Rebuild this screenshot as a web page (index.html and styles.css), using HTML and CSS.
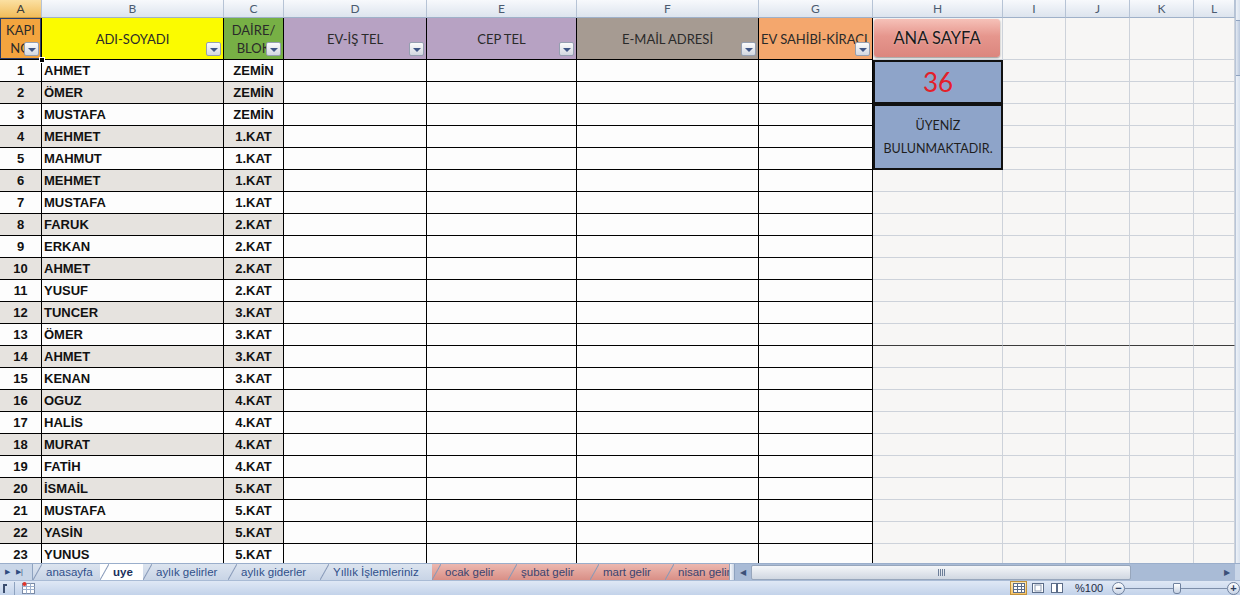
FILE: index.html
```html
<!DOCTYPE html>
<html lang="tr">
<head>
    <meta charset="UTF-8">
    <meta name="viewport" content="width=device-width, initial-scale=1.0">
    <title>Apartman Üye Listesi</title>
    <link rel="stylesheet" href="styles.css">
</head>
<body>
    <div class="window">
        <div class="sheet-area">
            <div class="grid" id="grid">
                <div class="colhead sel">A</div>
                <div class="colhead">B</div>
                <div class="colhead">C</div>
                <div class="colhead">D</div>
                <div class="colhead">E</div>
                <div class="colhead">F</div>
                <div class="colhead">G</div>
                <div class="colhead">H</div>
                <div class="colhead">I</div>
                <div class="colhead">J</div>
                <div class="colhead">K</div>
                <div class="colhead">L</div>

                <div class="hcell kapi">KAPI NO<span class="filter"></span><span class="fill-handle"></span></div>
                <div class="hcell adi">ADI-SOYADI<span class="filter"></span></div>
                <div class="hcell daire">DAİRE/ BLOK<span class="filter"></span></div>
                <div class="hcell tel">EV-İŞ TEL<span class="filter"></span></div>
                <div class="hcell tel">CEP TEL<span class="filter"></span></div>
                <div class="hcell mail">E-MAİL ADRESİ<span class="filter"></span></div>
                <div class="hcell sahip">EV SAHİBİ-KİRACI<span class="filter"></span></div>
                <div class="hcell home"><div class="home-btn">ANA SAYFA</div></div>
                <div class="hcell empty"></div>
                <div class="hcell empty"></div>
                <div class="hcell empty"></div>
                <div class="hcell empty"></div>
            </div>
            <div class="vscroll"><div class="vthumb"></div></div>
        </div>

        <div class="tabbar">
            <div class="tabnav"><span>&#9654;</span><span>&#9654;|</span></div>
            <div class="tabs">
                <div class="tab" style="width: 67px">anasayfa</div>
                <div class="tab active" style="width: 43px">uye</div>
                <div class="tab" style="width: 85px">aylık gelirler</div>
                <div class="tab" style="width: 92px">aylık giderler</div>
                <div class="tab" style="width: 112px">Yıllık İşlemleriniz</div>
                <div class="tab pink" style="width: 76px">ocak gelir</div>
                <div class="tab pink" style="width: 82px">şubat gelir</div>
                <div class="tab pink" style="width: 75px">mart gelir</div>
                <div class="tab pink" style="width: 64px">nisan gelir</div>
            </div>
            <div class="split"></div>
            <div class="hscroll">
                <span class="arrow">&#9664;</span>
                <div class="hthumb"><span class="grip"></span></div>
                <div class="track"></div>
                <span class="arrow">&#9654;</span>
            </div>
        </div>

        <div class="statusbar">
            <span class="status-mark"></span>
            <span class="status-sep"></span>
            <svg class="macro-icon" width="13" height="12" viewBox="0 0 13 12">
                <rect x="0.5" y="1.5" width="12" height="10" fill="#fff" stroke="#7a8aa6"/>
                <path d="M0.5 4.5h12M0.5 7.5h12M4.5 1.5v10M8.5 1.5v10" stroke="#9db0cc"/>
                <circle cx="2.5" cy="2" r="2" fill="#e0352b"/>
            </svg>
            <div class="status-space"></div>
            <div class="views">
                <span class="view on">
                    <svg width="12" height="10" viewBox="0 0 12 10"><rect x="0.5" y="0.5" width="11" height="9" fill="#fff" stroke="#5b6c88"/><path d="M0.5 3.5h11M0.5 6.5h11M4.5 0.5v9M8.5 0.5v9" stroke="#5b6c88"/></svg>
                </span>
                <span class="view">
                    <svg width="12" height="10" viewBox="0 0 12 10"><rect x="0.5" y="0.5" width="11" height="9" fill="#fff" stroke="#5b6c88"/><rect x="3" y="2" width="6" height="6" fill="none" stroke="#8a99b1"/></svg>
                </span>
                <span class="view">
                    <svg width="12" height="10" viewBox="0 0 12 10"><rect x="0.5" y="0.5" width="11" height="9" fill="#fff" stroke="#5b6c88"/><path d="M6 0.5v9" stroke="#5b6c88" stroke-width="2"/></svg>
                </span>
            </div>
            <span class="zoom-label">%100</span>
            <div class="zoom">
                <span class="zbtn">&minus;</span>
                <div class="zline"><span class="zthumb"></span></div>
                <span class="zbtn">+</span>
            </div>
        </div>
    </div>

    <script>
        const members = [
            ['AHMET', 'ZEMİN'], ['ÖMER', 'ZEMİN'], ['MUSTAFA', 'ZEMİN'],
            ['MEHMET', '1.KAT'], ['MAHMUT', '1.KAT'], ['MEHMET', '1.KAT'], ['MUSTAFA', '1.KAT'],
            ['FARUK', '2.KAT'], ['ERKAN', '2.KAT'], ['AHMET', '2.KAT'], ['YUSUF', '2.KAT'],
            ['TUNCER', '3.KAT'], ['ÖMER', '3.KAT'], ['AHMET', '3.KAT'], ['KENAN', '3.KAT'],
            ['OGUZ', '4.KAT'], ['HALİS', '4.KAT'], ['MURAT', '4.KAT'], ['FATİH', '4.KAT'],
            ['İSMAİL', '5.KAT'], ['MUSTAFA', '5.KAT'], ['YASİN', '5.KAT'], ['YUNUS', '5.KAT']
        ];

        const grid = document.getElementById('grid');

        members.forEach((member, i) => {
            const no = i + 1;
            const shade = no % 2 === 0 ? ' shade' : '';
            const brk = no === 13 ? ' brk' : '';

            let html = `<div class="cell num${shade}">${no}</div>`;
            html += `<div class="cell name${shade}">${member[0]}</div>`;
            html += `<div class="cell kat${shade}">${member[1]}</div>`;
            html += '<div class="cell"></div>'.repeat(4);

            // H sütunundaki birleşik kutular
            if (no === 1) html += '<div class="box count">36</div>';
            if (no === 3) html += '<div class="box note">ÜYENİZ<br>BULUNMAKTADIR.</div>';
            if (no > 5) html += `<div class="cell grd${brk}"></div>`;

            html += `<div class="cell grd${brk}"></div>`.repeat(4);
            grid.insertAdjacentHTML('beforeend', html);
        });
    </script>
</body>
</html>
```

FILE: styles.css
```css
* {
    box-sizing: border-box;
    margin: 0;
    padding: 0;
}

body {
    width: 1240px;
    height: 595px;
    overflow: hidden;
    background-color: #f7f6f5;
    font-family: Lato, 'Liberation Sans', sans-serif;
}

.window {
    display: flex;
    flex-direction: column;
    height: 595px;
}

.sheet-area {
    display: flex;
    height: 563px;
    overflow: hidden;
}

.grid {
    display: grid;
    grid-template-columns: 42px 182px 60px 143px 150px 182px 114px 130px 63px 64px 64px 41px;
    grid-template-rows: 18px 42px;
    grid-auto-rows: 22px;
    align-content: start;
    width: 1235px;
}

/* sütun başlıkları */
.colhead {
    display: flex;
    align-items: center;
    justify-content: center;
    background: linear-gradient(#f7f9fc, #dde4ee);
    border-right: 1px solid #b6c3d5;
    border-bottom: 1px solid #9fb1c9;
    color: #4b5b70;
    font-size: 12px;
}

.colhead.sel {
    background: linear-gradient(#fbe0a2, #f1bd5c);
    border-bottom-color: #c99a40;
    color: #3a3a3a;
}

/* tablo başlık satırı */
.hcell {
    position: relative;
    display: flex;
    align-items: center;
    justify-content: center;
    text-align: center;
    border-right: 1px solid #000;
    border-bottom: 1px solid #000;
    color: #2a2a2a;
    font-size: 13px;
    line-height: 18px;
    overflow: hidden;
}

.kapi {
    background-color: #f3a43e;
    overflow: visible;
    box-shadow: inset 0 0 0 1px #2c3f69;
    padding: 0 1px;
}

.adi {
    background-color: #fbfb00;
}

.daire {
    background-color: #77b045;
}

.tel {
    background-color: #b7a2c3;
}

.mail {
    background-color: #a69b92;
}

.sahip {
    background-color: #f4a76d;
    justify-content: flex-start;
    white-space: nowrap;
    padding-left: 2px;
}

.hcell.home,
.hcell.empty {
    border-color: #cdd2da;
    background-color: #f7f6f5;
}

.hcell.home {
    align-items: stretch;
    padding: 1px 2px 2px 1px;
}

.home-btn {
    flex: 1;
    display: flex;
    align-items: center;
    justify-content: center;
    background: linear-gradient(#f6c1b8, #e6968d 45%, #db867e);
    border-radius: 3px;
    box-shadow: 0 1px 2px rgba(0, 0, 0, 0.4);
    color: #1a1a1a;
    font-size: 16.5px;
    text-shadow: 0 0 2px rgba(255, 255, 255, 0.5);
}

.filter {
    position: absolute;
    right: 2px;
    bottom: 3px;
    width: 15px;
    height: 14px;
    border: 1px solid #959fb1;
    border-radius: 2px;
    background: linear-gradient(#fbfbfc, #d3d8e0);
}

.filter::after {
    content: '';
    position: absolute;
    left: 3px;
    top: 5px;
    border-left: 4px solid transparent;
    border-right: 4px solid transparent;
    border-top: 4px solid #3f5585;
}

.fill-handle {
    position: absolute;
    right: -4px;
    bottom: -4px;
    width: 6px;
    height: 6px;
    background-color: #000;
    border: 1px solid #fff;
    z-index: 2;
}

/* veri hücreleri */
.cell {
    border-right: 1px solid #000;
    border-bottom: 1px solid #000;
    background-color: #fdfdfd;
    color: #111;
    font-family: 'Liberation Sans', Arial, sans-serif;
    font-size: 13px;
    font-weight: bold;
    line-height: 21px;
    white-space: nowrap;
    overflow: hidden;
}

.cell.shade {
    background-color: #e6e3df;
}

.num,
.kat {
    text-align: center;
}

.name {
    padding-left: 2px;
}

.cell.grd {
    border-right-color: #cdd2da;
    border-bottom-color: #cdd2da;
    background-color: #f7f6f5;
}

.cell.grd.brk {
    border-bottom-color: #3c3c3c;
}

.box {
    display: flex;
    align-items: center;
    justify-content: center;
    text-align: center;
    background-color: #8ea4c9;
    border: 2px solid #111;
}

.count {
    grid-row: span 2;
    color: #e3202a;
    font-size: 26px;
}

.note {
    grid-row: span 3;
    color: #1e1e1e;
    font-size: 12.5px;
    line-height: 23px;
}

.vscroll {
    width: 5px;
    background: linear-gradient(90deg, #eef2f8, #d9e2ee);
    border-left: 1px solid #b8c5d8;
}

.vthumb {
    margin-top: 20px;
    height: 56px;
    background: linear-gradient(90deg, #e3e9f2, #b9c7dc);
    border-top: 1px solid #8ea2bf;
    border-bottom: 1px solid #8ea2bf;
}

/* sayfa sekmeleri */
.tabbar {
    display: flex;
    height: 17px;
    background-color: #c9d6e8;
    border-top: 1px solid #9aaecb;
    font-family: 'Liberation Sans', Arial, sans-serif;
    font-size: 11.5px;
}

.tabnav {
    display: flex;
    align-items: center;
    gap: 6px;
    width: 33px;
    padding-left: 5px;
    color: #2f4c80;
    font-size: 7px;
    border-right: 1px solid #8fa3c0;
}

.tabs {
    display: flex;
    width: 696px;
    overflow: hidden;
}

.tab {
    position: relative;
    flex: none;
    padding-left: 13px;
    line-height: 16px;
    white-space: nowrap;
    overflow: hidden;
    color: #30508a;
    background: linear-gradient(#dce4ef, #c8d4e6);
}

.tab::before {
    content: '';
    position: absolute;
    left: 0;
    top: 0;
    width: 9px;
    height: 100%;
    background: linear-gradient(to bottom right, transparent calc(50% - 1px), #8799b8 50%, transparent calc(50% + 1px));
}

.tab.active {
    background: #fff;
    color: #1b2f5c;
    font-weight: bold;
}

.tab.pink {
    background: linear-gradient(#ecb8b0, #d98f86);
    color: #3a4470;
}

.split {
    width: 6px;
    background: linear-gradient(90deg, #f6f8fb, #cdd7e6);
    border-left: 1px solid #8ea2bf;
    border-right: 1px solid #8ea2bf;
}

.hscroll {
    display: flex;
    align-items: center;
    width: 500px;
    background-color: #a9bbd6;
}

.hscroll .arrow {
    width: 16px;
    text-align: center;
    color: #3c5078;
    font-size: 8px;
}

.hthumb {
    display: flex;
    align-items: center;
    justify-content: center;
    width: 380px;
    height: 15px;
    background: linear-gradient(#f4f6f9, #d0d7e1);
    border: 1px solid #97a6bc;
    border-radius: 2px;
}

.grip {
    width: 7px;
    height: 7px;
    background: repeating-linear-gradient(90deg, #6d7e98 0 1px, transparent 1px 2px);
}

.track {
    flex: 1;
}

/* durum çubuğu */
.statusbar {
    display: flex;
    align-items: center;
    height: 15px;
    background: linear-gradient(#dfe8f5, #c3d3ea);
    border-top: 1px solid #a9bbd5;
    color: #1e2c44;
    font-family: 'Liberation Sans', Arial, sans-serif;
    font-size: 11px;
}

.status-mark {
    width: 4px;
    height: 9px;
    margin-left: 3px;
    border-left: 2px solid #3b4d6e;
    border-top: 2px solid #3b4d6e;
}

.status-sep {
    width: 1px;
    height: 13px;
    margin: 0 7px 0 7px;
    background-color: #8ea2bf;
}

.status-space {
    flex: 1;
}

.views {
    display: flex;
    gap: 2px;
    margin-right: 10px;
}

.view {
    display: flex;
    align-items: center;
    justify-content: center;
    width: 17px;
    height: 14px;
}

.view.on {
    background: linear-gradient(#fde7b2, #f6c46a);
    border: 1px solid #c2923a;
}

.zoom-label {
    width: 34px;
    margin-right: 3px;
}

.zoom {
    display: flex;
    align-items: center;
    width: 128px;
}

.zbtn {
    width: 13px;
    height: 13px;
    border: 1px solid #6f819e;
    border-radius: 50%;
    background: linear-gradient(#ffffff, #c7d3e6);
    color: #2d3d5c;
    font-size: 11px;
    line-height: 11px;
    text-align: center;
    font-weight: bold;
}

.zline {
    position: relative;
    flex: 1;
    height: 1px;
    background-color: #7d8ea9;
}

.zthumb {
    position: absolute;
    left: 48px;
    top: -5px;
    width: 8px;
    height: 11px;
    background: linear-gradient(#ffffff, #c5d1e3);
    border: 1px solid #6f819e;
    border-radius: 1px 1px 3px 3px;
}
```
